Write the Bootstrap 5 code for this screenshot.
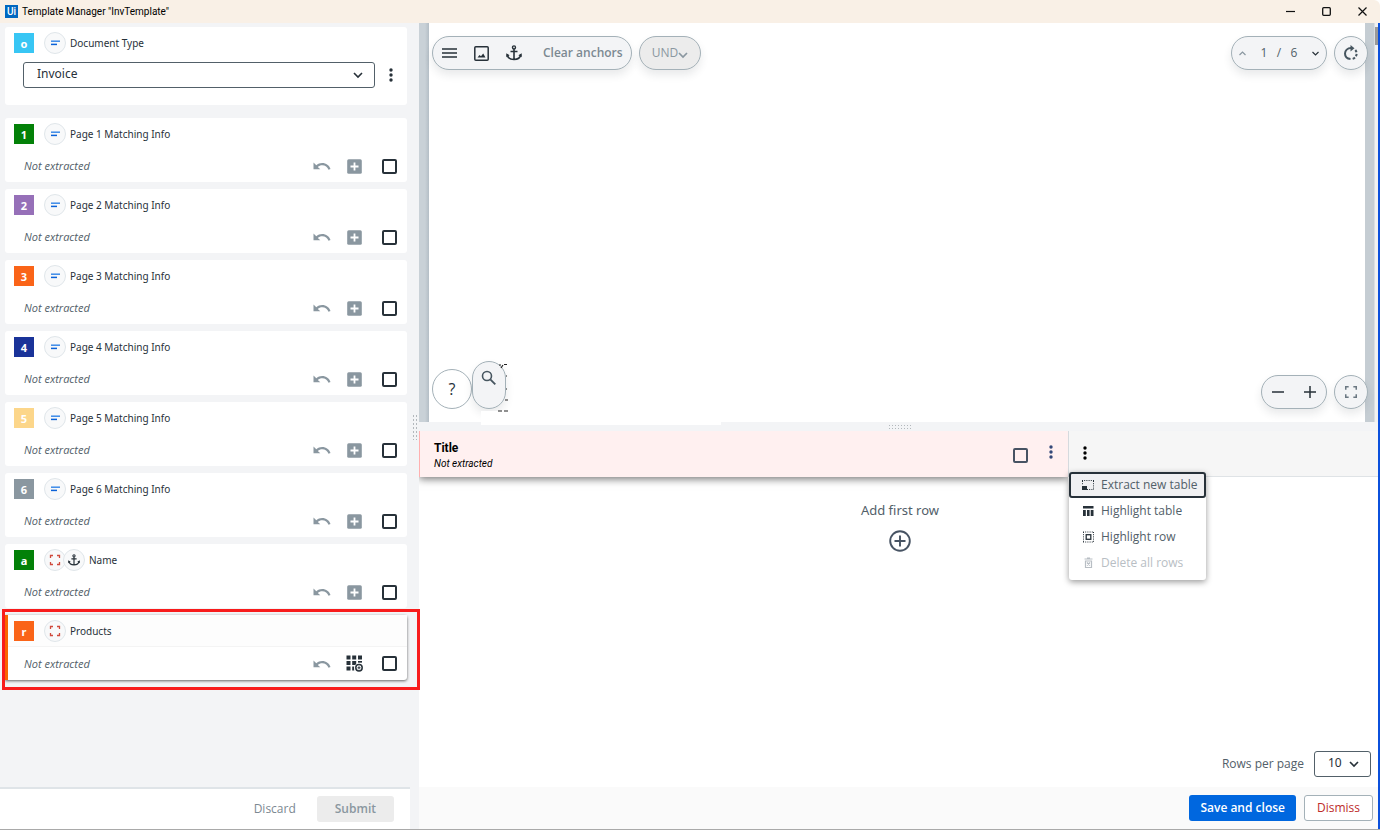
<!DOCTYPE html>
<html lang="en">
<head>
<meta charset="utf-8">
<meta name="viewport" content="width=device-width, initial-scale=1">
<title>Template Manager "InvTemplate"</title>
<link href="https://cdn.jsdelivr.net/npm/bootstrap@5.3.0/dist/css/bootstrap.min.css" rel="stylesheet">
<style>
  :root { --ink: #273139; --slate: #526069; --mute: #8a97a0; --line: #a4b1b8; --panel: #f3f4f6; }
  body { font-family: "Open Sans", "Noto Sans", sans-serif; font-size: 12px; line-height: 16px; color: var(--slate); background: #fff; }
  svg { display: block; flex: none; }
  .icon-btn { padding: 0; border: 0; background: none; color: var(--ink); display: flex; align-items: center; justify-content: center; }
  .window-frame { height: 100vh; min-height: 620px; }
  .titlebar { height: 23px; padding: 0 8px 0 5px; background: #f9f0e6; border-top-right-radius: 6px; color: #000; font-family: Roboto, sans-serif; font-size: 10px; }
  .logo { width: 13px; height: 13px; background: #0067c0; color: #fff; font-size: 10px; line-height: 13px; font-weight: 500; text-align: center; }
  .titlebar .icon-btn { width: 20px; height: 20px; }
  .workspace { border-bottom: 1px solid #a9a9a9; min-height: 0; }

  /* Field list */
  .sidebar { width: 419px; background: var(--panel); }
  .fields { padding: 4px 12px 0 5px; gap: 7px; }
  .field { position: relative; background: #fff; border-radius: 3px; color: var(--ink); }
  .field.first { padding-bottom: 17px; margin-bottom: 6px; }
  .field-head, .field-row { height: 32px; padding-left: 9px; }
  .field-head { font-family: "Noto Sans", sans-serif; font-size: 10px; }
  .field-row { padding: 0 10px 0 19px; }
  .chip { width: 20px; height: 20px; margin-right: 10px; padding-top: 1px; font-size: 11px; line-height: 20px; font-weight: 700; text-align: center; color: #fff; }
  .kind { width: 22px; height: 22px; border: 1px solid #e0e6ea; border-radius: 50%; background: #f8f9fa; display: flex; align-items: center; justify-content: center; margin-right: 4px; }
  .kind + .kind { margin-left: -7px; }
  .field-row em { font-size: 11px; color: var(--slate); }
  .field-row .icon-btn { width: 18px; height: 18px; color: #8a97a0; }
  .tick { appearance: none; width: 15px; height: 15px; margin: 0; border: 2px solid var(--ink); border-radius: 2px; background: #fff; }
  .picker { appearance: none; border: 1px solid var(--slate); border-radius: 3px; height: 26px; color: var(--ink); font-family: "Noto Sans", sans-serif; font-size: 12px; line-height: 16px; padding: 2px 28px 4px 13px;
    background: #fff url("data:image/svg+xml,%3Csvg xmlns='http://www.w3.org/2000/svg' width='10' height='7'%3E%3Cpath d='M1 1l4 4 4-4' fill='none' stroke='%23273139' stroke-width='1.6'/%3E%3C/svg%3E") no-repeat right 11px center; }
  .field.active { border-left: 3px solid #fa6400; border-radius: 0 3px 3px 0; box-shadow: 0 1px 3px rgba(0,0,0,.6); }
  .field.active .field-head { padding-left: 6px; background: #fdfdfd; border-bottom: 1px solid #f4f4f4; }
  .field.active .field-row { height: 33px; padding-left: 16px; }
  .callout { position: absolute; inset: -6px -13px -10px -6px; border: 3px solid #f81c1c; z-index: 5; pointer-events: none; }
  .side-foot { height: 42px; margin-right: 9px; padding-right: 16px; background: #fff; border-top: 2px solid #dfe4e8; }
  .act { height: 26px; padding: 0 12px; border: 1px solid transparent; border-radius: 3px; font-size: 12px; line-height: 16px; font-weight: 600; }
  .act-submit { background: #ececec; color: var(--mute); padding: 0 17px; }
  .act-plain { background: none; color: #7c8992; padding: 0 20px; font-weight: 500; }
  .act-save { background: #0067df; color: #fff; padding: 0 10px; }
  .act-dismiss { background: #fff; border-color: var(--line); color: #bd2b2b; font-weight: 500; }
  .grip-v { position: absolute; left: 412px; top: 391px; width: 6px; height: 26px; }
  .dots { background: radial-gradient(circle, #b3b8bc 1px, transparent 1px) 0 0 / 3px 4px; }

  /* Document viewer */
  .stage { min-width: 0; border-right: 2px solid #0b50dc; }
  .viewer { position: relative; height: calc(50vh - 16px); padding: 0 13px 0 10px; background: linear-gradient(90deg, #c9d1d7, #c9d1d7 6px, #b4bec6 10px, #c5cdd3 10px, #c5cdd3 calc(100% - 4px), #f1f1f1 calc(100% - 3px)); }
  .sheet { height: 100%; background: #fff; }
  .thumb { position: absolute; right: 0; top: 4px; width: 3px; height: 18px; background: #999; }
  .bar { position: absolute; display: flex; gap: 7px; }
  .pill { height: 34px; border: 1px solid var(--line); border-radius: 20px; background: var(--panel); box-shadow: 0 5px 8px rgba(39,49,57,.1); display: flex; align-items: center; color: var(--ink); }
  .round { width: 34px; justify-content: center; padding: 0; }
  .bar-tl { left: 13px; top: 13px; }
  .bar-tr { right: 10px; top: 13px; }
  .bar-br { right: 10px; bottom: 13px; }
  .bar-bl { left: 13px; bottom: 13px; gap: 0; align-items: flex-end; }
  .help { width: 40px; height: 40px; background: #fff; font-size: 16px; box-shadow: none; }
  .find { height: 48px; align-items: flex-start; padding-top: 8px; }
  .blank { position: absolute; left: 62px; bottom: -3px; width: 240px; height: 14px; background: #fff; z-index: 2; }
  .scan { position: absolute; left: 79px; bottom: 10px; z-index: 3; }
  .splitter { height: 9px; padding-left: 3px; background: var(--panel); display: flex; justify-content: center; }
  .grip-h { width: 25px; height: 6px; margin-top: 2px; background-size: 3px 3px; }

  /* Extracted rows */
  .grid-head { margin: 0; table-layout: fixed; border-collapse: separate; border-spacing: 0; }
  .grid-head th { padding: 0; font-weight: 400; height: 46px; }
  .col-title { font-family: Roboto, sans-serif; font-size: 12px; color: #000; height: 46px; padding: 0 12px 0 14px; background: #fff0f0; border-left: 1px solid #ffb0b0; box-shadow: 0 2px 8px rgba(0,0,0,.55); clip-path: inset(0 0 -16px 0); }
  .col-title em { font-size: 10px; line-height: 16px; }
  .col-title .tick { margin-top: 3px; border-color: #475363; background: #fff0f0; }
  .grid-head .col-tools { width: 310px; background: #f6f6f6; border-left: 1px solid #d5dade; border-bottom: 1px solid #dfe3e6; position: relative; vertical-align: top; }
  .col-tools > .icon-btn { margin: 14px 0 0 8px; width: 16px; height: 16px; color: #000; }
  .row-menu { position: absolute; left: 0; top: 41px; width: 137px; padding: 0 0 4px; margin: 0; border: 0; border-radius: 3px; background: #fff; box-shadow: 0 2px 6px rgba(0,0,0,.4); z-index: 4; display: block; min-width: 0; font-size: 12px; }
  .row-menu .dropdown-item { height: 26px; padding: 0 11px; display: flex; align-items: center; gap: 6px; color: var(--slate); border: 1px solid transparent; }
  .row-menu .dropdown-item.current { background: #f0f0f2; border: 2px solid var(--ink); border-radius: 3px; padding: 0 10px; }
  .row-menu .dropdown-item:disabled { color: #b8bec4; }
  .row-menu svg { color: var(--ink); }
  .row-menu :disabled svg { color: #b8bec4; }
  .add-row { padding: 25px 0 0 3px; font-family: "Noto Sans", sans-serif; font-size: 13px; }
  .pager { padding: 0 7px 10px 0; gap: 10px; font-size: 12px; }
  .pager .picker { width: 57px; padding-left: 13px; }
  .stage-foot { height: 42px; padding-right: 5px; gap: 8px; background: #fafafa; }
</style>
</head>
<body>
<svg width="0" height="0" class="position-absolute" aria-hidden="true">
  <symbol id="i-text" viewBox="0 0 10 6"><path d="M1 1.2h9" stroke="#3d8be8" stroke-width="1.5"/><path d="M1 4.4h6" stroke="#0b62d8" stroke-width="1.5"/></symbol>
  <symbol id="i-box" viewBox="0 0 12 12"><path d="M1.5 4V1.5H4M8 1.5h2.500V4M10.500 8v2.500H8M4 10.500H1.500V8" fill="none" stroke="currentColor" stroke-width="1.300"/></symbol>
  <symbol id="i-anchor" viewBox="0 0 16 16"><circle cx="8" cy="2.400" r="1.500" fill="none" stroke="currentColor" stroke-width="1.400"/><path d="M8 4v10.500M4.500 6.500h7M1.200 9.500c.5 3 3.300 5 6.800 5s6.300-2 6.800-5" fill="none" stroke="currentColor" stroke-width="1.600"/><path d="M.3 8.200v4l3.300-2zM15.700 8.200v4l-3.300-2z" fill="currentColor"/></symbol>
  <symbol id="i-undo" viewBox="0 0 18 8"><path d="M.5.5v6.800h6.800L4.800 4.900C6 3.900 7.500 3.200 9.200 3.200c3 0 5.400 1.800 6.300 4.500l2-.7C16.400 3.500 13.100 1 9.200 1c-2.300 0-4.300.9-5.900 2.300z" fill="currentColor"/></symbol>
  <symbol id="i-plus" viewBox="0 0 15 15"><rect x=".2" y=".2" width="14.600" height="14.600" rx="1.500" fill="currentColor"/><path d="M7.500 3.500v8M3.500 7.500h8" stroke="#fff" stroke-width="1.800"/></symbol>
  <symbol id="i-grid" viewBox="0 0 17 17"><path d="M.5.500h4v4h-4zM6.200.500h4v4h-4zM12 .500h4v4h-4zM.500 6h4v4h-4zM6.200 6h4v4h-4zM12 6h4v1.500h-4zM.500 11.500h4v4h-4zM6.200 11.500h2v4h-2z" fill="currentColor"/><circle cx="13" cy="12.800" r="4.800" fill="#fff"/><circle cx="13" cy="12.800" r="3.200" fill="#fff" stroke="currentColor" stroke-width="1.500"/><path d="M13 11.300v3M11.500 12.800h3" stroke="currentColor"/><path d="M12 6h4v1.300h-4z" fill="currentColor"/></symbol>
  <symbol id="i-kebab" viewBox="0 0 4 14"><circle cx="2" cy="2" r="1.700" fill="currentColor"/><circle cx="2" cy="7" r="1.700" fill="currentColor"/><circle cx="2" cy="12" r="1.700" fill="currentColor"/></symbol>
</svg>

<div class="window-frame d-flex flex-column">
  <header class="titlebar d-flex align-items-center">
    <span class="logo" aria-hidden="true">Ui</span>
    <span class="ms-1">Template Manager "InvTemplate"</span>
    <div class="ms-auto d-flex gap-3">
      <button class="icon-btn" type="button" aria-label="Minimize"><svg width="9" height="9"><path d="M0 4.500h9" stroke="#111" stroke-width="1.200"/></svg></button>
      <button class="icon-btn" type="button" aria-label="Maximize"><svg width="9" height="9"><rect x=".7" y=".7" width="7.600" height="7.600" rx="1" fill="none" stroke="#111" stroke-width="1.300"/></svg></button>
      <button class="icon-btn" type="button" aria-label="Close"><svg width="9" height="9"><path d="M.5.500l8 8M8.500.500l-8 8" stroke="#111" stroke-width="1.200"/></svg></button>
    </div>
  </header>

  <div class="workspace d-flex flex-grow-1 position-relative">
    <aside class="sidebar d-flex flex-column flex-shrink-0">
      <div class="fields d-flex flex-column flex-grow-1" id="fields">
        <section class="field first">
          <div class="field-head d-flex align-items-center">
            <span class="chip" style="background:#38c6f4">o</span>
            <span class="kind"><svg width="10" height="6"><use href="#i-text"/></svg></span>
            <label for="doctype">Document Type</label>
          </div>
          <div class="d-flex align-items-center" style="padding:3px 13px 0 18px;gap:13px">
            <select id="doctype" class="picker flex-grow-1"><option>Invoice</option></select>
            <button class="icon-btn" type="button" aria-label="Document type options"><svg width="6" height="14"><use href="#i-kebab"/></svg></button>
          </div>
        </section>
      </div>
      <footer class="side-foot d-flex align-items-center justify-content-end">
        <button class="act act-plain" type="button">Discard</button>
        <button class="act act-submit" type="button">Submit</button>
      </footer>
    </aside>
    <div class="grip-v dots"></div>

    <main class="stage d-flex flex-column flex-grow-1">
      <div class="viewer">
        <div class="sheet"></div>
        <div class="thumb"></div>
        <svg class="scan" width="10" height="50" viewBox="0 0 10 50"><path d="M1 3h2M5 3l-2 3M6 2.500h3M8 14h1M8 27h1M7 38h3M0 49h4M6 49h4" stroke="#222" stroke-width="1.200" fill="none"/></svg>
        <div class="blank"></div>
        <div class="bar bar-tl">
          <div class="pill" style="padding:0 8px 0 9px">
            <button class="icon-btn" type="button" aria-label="Menu"><svg width="15" height="10"><path d="M0 1h15M0 5h15M0 9h15" stroke="currentColor" stroke-width="1.500"/></svg></button>
            <button class="icon-btn" type="button" aria-label="Image" style="margin:0 17px"><svg width="15" height="15"><rect x=".8" y=".8" width="13.400" height="13.400" rx="1" fill="none" stroke="currentColor" stroke-width="1.500"/><path d="M3.500 11.500l2-2.500 1.500 1.300 2.200-2.800 2.300 4z" fill="currentColor"/></svg></button>
            <button class="icon-btn" type="button" aria-label="Anchor"><svg width="16" height="16"><use href="#i-anchor"/></svg></button>
            <button class="icon-btn" type="button" style="color:#7c8992;font-weight:600;margin-left:21px">Clear anchors</button>
          </div>
          <button class="pill" type="button" style="background:#ececec;color:#8a97a0;padding:0 12px">UND<svg width="10" height="7" class="mt-1"><path d="M1 1l4 4 4-4" fill="none" stroke="currentColor" stroke-width="1.700"/></svg></button>
        </div>
        <div class="bar bar-tr">
          <div class="pill justify-content-between" style="width:96px;padding:0 7px;color:#526069">
            <button class="icon-btn" type="button" aria-label="Previous page"><svg width="7" height="5"><path d="M.5 4L3.500 1l3 3" fill="none" stroke="#8a97a0" stroke-width="1.200"/></svg></button>
            <span>1&nbsp;&nbsp; /&nbsp;&nbsp; 6</span>
            <button class="icon-btn" type="button" aria-label="Next page"><svg width="7" height="5"><path d="M.5 1l3 3 3-3" fill="none" stroke="#273139" stroke-width="1.200"/></svg></button>
          </div>
          <button class="pill round" type="button" aria-label="Rotate"><svg width="16" height="16" viewBox="0 0 16 16"><path d="M7.500 14C4 13.700 2 11.500 2 8.500S4.500 3 8 3" fill="none" stroke="#475660" stroke-width="2"/><path d="M7.500 0v6.400L11.500 3.200z" fill="#475660"/><path d="M12.300 5A5.500 5.500 0 0 1 9 14" fill="none" stroke="#475660" stroke-width="2" stroke-dasharray="2.600 1.500"/></svg></button>
        </div>
        <div class="bar bar-bl">
          <button class="pill round help" type="button" aria-label="Help">?</button>
          <button class="pill round find" type="button" aria-label="Search"><svg width="16" height="16"><circle cx="6" cy="6" r="4.500" fill="none" stroke="#475660" stroke-width="1.600"/><path d="M9.300 9.300l5 5" stroke="#475660" stroke-width="1.900"/></svg></button>
        </div>
        <div class="bar bar-br">
          <div class="pill justify-content-between" style="width:66px;padding:0 10px">
            <button class="icon-btn" type="button" aria-label="Zoom out"><svg width="12" height="12"><path d="M0 6h12" stroke="currentColor" stroke-width="1.500"/></svg></button>
            <button class="icon-btn" type="button" aria-label="Zoom in"><svg width="12" height="12"><path d="M0 6h12M6 0v12" stroke="currentColor" stroke-width="1.500"/></svg></button>
          </div>
          <button class="pill round" type="button" aria-label="Fit to window" style="color:#6b7882"><svg width="14" height="14"><use href="#i-box"/></svg></button>
        </div>
      </div>

      <div class="splitter"><div class="grip-h dots"></div></div>

      <table class="grid-head w-100">
        <thead><tr>
          <th scope="col">
            <div class="col-title d-flex align-items-center">
              <div class="flex-grow-1 d-flex flex-column pt-1"><b>Title</b><em>Not extracted</em></div>
              <input class="tick" type="checkbox" aria-label="Title validated">
              <button class="icon-btn" type="button" aria-label="Title options" style="margin:0 3px 4px 21px;color:#334878"><svg width="4" height="14"><use href="#i-kebab"/></svg></button>
            </div>
          </th>
          <th scope="col" class="col-tools">
            <button class="icon-btn" type="button" aria-label="Table options"><svg width="4" height="14"><use href="#i-kebab"/></svg></button>
            <ul class="dropdown-menu row-menu">
              <li><button class="dropdown-item current" type="button"><svg width="14" height="12" viewBox="0 0 14 12"><path d="M1 1.500h12M12.500 2v9M6 10.500h7M1.500 2v4" stroke="currentColor" fill="none" stroke-dasharray="1 1.200"/><path d="M1 7h5v4H1z" fill="currentColor"/></svg>Extract new table</button></li>
              <li><button class="dropdown-item" type="button"><svg width="14" height="12" viewBox="0 0 14 12"><path d="M2 1h10.500v2.500H2zM2 5h2.800v6H2zM6 5h2.600v6H6zM9.700 5h2.800v6H9.700z" fill="currentColor"/></svg>Highlight table</button></li>
              <li><button class="dropdown-item" type="button"><svg width="14" height="12" viewBox="0 0 14 12"><path d="M2 1h11M2 11h11M2.500 1v10M12.500 1v10" stroke="currentColor" fill="none" stroke-dasharray="1 1.200"/><rect x="5.200" y="3.700" width="4.600" height="4.600" fill="none" stroke="currentColor" stroke-width="1.300"/></svg>Highlight row</button></li>
              <li><button class="dropdown-item" type="button" disabled><svg width="14" height="12" viewBox="0 0 14 12"><path d="M3.500 2h8M6 1h3" stroke="currentColor" stroke-width="1.200"/><path d="M4.500 4h6v6.500h-6zM6 5.500l3 3M9 5.500l-3 3" stroke="currentColor" fill="none" stroke-width="1.200"/></svg>Delete all rows</button></li>
            </ul>
          </th>
        </tr></thead>
      </table>

      <div class="add-row flex-grow-1 d-flex flex-column align-items-center">
        <span>Add first row</span>
        <button class="icon-btn mt-2 pt-1" type="button" aria-label="Add first row"><svg width="22" height="22"><circle cx="11" cy="11" r="9.800" fill="none" stroke="#475363" stroke-width="1.900"/><path d="M11 5.500v11M5.500 11h11" stroke="#475363" stroke-width="1.900"/></svg></button>
      </div>

      <div class="pager d-flex justify-content-end align-items-center">
        <label for="rows">Rows per page</label>
        <select id="rows" class="picker"><option>10</option></select>
      </div>
      <footer class="stage-foot d-flex justify-content-end align-items-center">
        <button class="act act-save" type="button">Save and close</button>
        <button class="act act-dismiss" type="button">Dismiss</button>
      </footer>
    </main>
  </div>
</div>

<script src="https://cdn.jsdelivr.net/npm/bootstrap@5.3.0/dist/js/bootstrap.bundle.min.js"></script>
<script>
  const fields = [
    ['1', '#038108', 'Page 1 Matching Info', ['text']],
    ['2', '#9670b8', 'Page 2 Matching Info', ['text']],
    ['3', '#fa6418', 'Page 3 Matching Info', ['text']],
    ['4', '#1a3399', 'Page 4 Matching Info', ['text']],
    ['5', '#fcd68a', 'Page 5 Matching Info', ['text']],
    ['6', '#8a97a0', 'Page 6 Matching Info', ['text']],
    ['a', '#038108', 'Name', ['box', 'anchor']],
    ['r', '#fa6418', 'Products', ['box']]
  ];
  const kinds = {
    text: '<svg width="10" height="6"><use href="#i-text"/></svg>',
    box: '<svg width="12" height="12" style="color:#d04a3c"><use href="#i-box"/></svg>',
    anchor: '<svg width="12" height="12"><use href="#i-anchor"/></svg>'
  };
  document.getElementById('fields').insertAdjacentHTML('beforeend', fields.map(([key, color, name, types]) => {
    const active = name === 'Products';
    const add = active
      ? '<svg width="17" height="17" style="color:#273139"><use href="#i-grid"/></svg>'
      : '<svg width="15" height="15"><use href="#i-plus"/></svg>';
    return `<section class="field${active ? ' active' : ''}">
      <div class="field-head d-flex align-items-center">
        <span class="chip" style="background:${color}">${key}</span>
        ${types.map(t => `<span class="kind">${kinds[t]}</span>`).join('')}
        <span>${name}</span>
      </div>
      <div class="field-row d-flex align-items-center">
        <em class="me-auto">Not extracted</em>
        <button class="icon-btn" type="button" aria-label="Undo ${name}"><svg width="18" height="8"><use href="#i-undo"/></svg></button>
        <button class="icon-btn" type="button" aria-label="Add ${name}" style="margin:0 19px 0 14px">${add}</button>
        <input class="tick" type="checkbox" aria-label="${name} validated">
      </div>
      ${active ? '<div class="callout"></div>' : ''}
    </section>`;
  }).join(''));
</script>
</body>
</html>
